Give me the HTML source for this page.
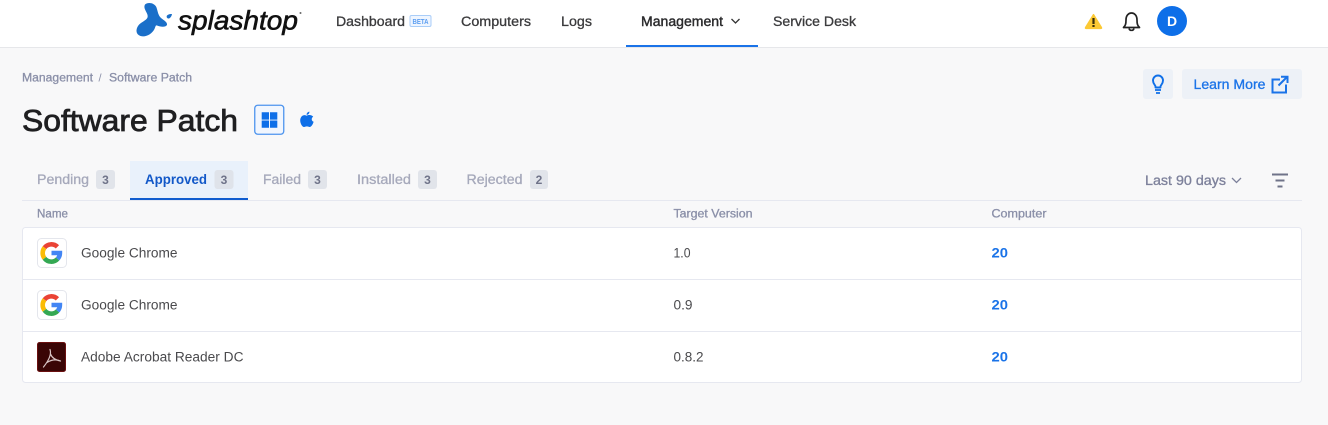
<!DOCTYPE html>
<html><head><meta charset="utf-8"><title>Software Patch</title>
<style>
html,body{margin:0;padding:0;background:#f8f8f9;width:1328px;height:425px;overflow:hidden}
svg{display:block}
text{font-family:"Liberation Sans",sans-serif;}
.m{stroke-width:.3px;paint-order:stroke}
</style></head><body>
<svg width="1328" height="425" viewBox="0 0 1328 425" xmlns="http://www.w3.org/2000/svg">
<defs>
<g id="g">
<rect x=".5" y=".5" width="29" height="29" rx="4" fill="#fff" stroke="#e4e6ec"/>
<g fill="none" stroke-width="4.600">
<path d="M20.400 8.900A8.600 8.600 0 0 0 7.500 9.700" stroke="#ea4335"/>
<path d="M7.500 9.700A8.600 8.600 0 0 0 7.500 20.300" stroke="#fbbc05"/>
<path d="M7.500 20.300A8.600 8.600 0 0 0 20.600 20.900" stroke="#34a853"/>
<path d="M20.600 20.900A8.600 8.600 0 0 0 22.900 15H14.500" stroke="#4285f4"/>
</g>
</g>
</defs>
<rect width="1328" height="425" fill="#f8f8f9"/>
<!-- header -->
<rect width="1328" height="47" fill="#fff"/>
<rect y="47" width="1328" height="1" fill="#e6e7ea"/>
<path d="M145 4.500C148 1.500 155 3 156.500 7.500C158 12 158 15 161 18C164 20.500 167.500 22 167 25C165.500 27.500 160.500 27 157 25.500C155.500 25 155.500 27 154.500 29C152 34 146 37.500 140.500 36C136 34.500 135.500 30 138 26C140.500 22 146 21 147.500 17.500C149 13.500 142.500 9 145 4.500Z" fill="#1a6fc9"/>
<path d="M167 15.500C168.500 14 171 13.700 172 14.200C171.500 16.500 170 18.500 168.300 18.500C166.800 18.300 166.200 16.800 167 15.500Z" fill="#1a6fc9"/>
<text x="178" y="29.500" font-size="27" font-style="italic" fill="#111" stroke="#111" stroke-width=".6" textLength="120" lengthAdjust="spacingAndGlyphs">splashtop</text>
<circle cx="300.500" cy="13" r="1" fill="#666"/>

<text class="m" x="336" y="26" font-size="13.500" fill="#3a3a3c" stroke="#3a3a3c" textLength="69" lengthAdjust="spacingAndGlyphs">Dashboard</text>
<rect x="410" y="15.500" width="21" height="11" rx="1.500" fill="#eef5ff" stroke="#a9cdf8"/>
<text x="412.500" y="24" font-size="7" font-weight="bold" fill="#5b9df0" textLength="16" lengthAdjust="spacingAndGlyphs">BETA</text>
<text class="m" x="461" y="26" font-size="13.500" fill="#3a3a3c" stroke="#3a3a3c" textLength="70" lengthAdjust="spacingAndGlyphs">Computers</text>
<text class="m" x="561" y="26" font-size="13.500" fill="#3a3a3c" stroke="#3a3a3c" textLength="31" lengthAdjust="spacingAndGlyphs">Logs</text>
<text class="m" x="641" y="26" font-size="13.500" fill="#2a2a2c" stroke="#2a2a2c" style="stroke-width:.4px" textLength="82" lengthAdjust="spacingAndGlyphs">Management</text>
<path d="M731.500 19l4 4 4-4" fill="none" stroke="#333" stroke-width="1.300"/>
<rect x="626" y="45" width="132" height="2" fill="#1a73e8"/>
<text class="m" x="773" y="26" font-size="13.500" fill="#3a3a3c" stroke="#3a3a3c" textLength="83" lengthAdjust="spacingAndGlyphs">Service Desk</text>

<path d="M1093.500 14.500L1101.500 27.500Q1102 28.500 1101 28.500H1086Q1085 28.500 1085.500 27.500Z" fill="#fcc934" stroke="#fcc934" stroke-width="1.200" stroke-linejoin="round"/>
<rect x="1092.400" y="18" width="2.200" height="6" fill="#3a2f0a"/>
<rect x="1092.400" y="25" width="2.200" height="2" fill="#3a2f0a"/>
<path d="M1123.500 27.500H1139.500C1137.500 25.500 1137 24 1137 20C1137 15.500 1134.500 13 1131.500 13S1126 15.500 1126 20C1126 24 1125.500 25.500 1123.500 27.500Z" fill="none" stroke="#222" stroke-width="1.700" stroke-linejoin="round"/>
<path d="M1129 28.500a2.600 2.600 0 0 0 5 0" fill="none" stroke="#222" stroke-width="1.600"/>
<circle cx="1172" cy="21" r="15" fill="#0e6fe8"/>
<text x="1172" y="26" font-size="14" font-weight="bold" fill="#fff" text-anchor="middle">D</text>

<!-- breadcrumb -->
<text class="m" x="22" y="81.500" font-size="11.500" fill="#8a8fa8" stroke="#8a8fa8" textLength="71" lengthAdjust="spacingAndGlyphs">Management</text>
<text x="98.500" y="81.500" font-size="11" fill="#8a8fa8">/</text>
<text class="m" x="109" y="81.500" font-size="11.500" fill="#8a8fa8" stroke="#8a8fa8" textLength="83" lengthAdjust="spacingAndGlyphs">Software Patch</text>

<!-- title -->
<text x="22" y="131" font-size="31" fill="#1f1f21" stroke="#1f1f21" stroke-width=".8" textLength="216" lengthAdjust="spacingAndGlyphs">Software Patch</text>
<rect x="254.750" y="105.250" width="29" height="29" rx="3" fill="#f1f6fe" stroke="#4d94ee" stroke-width="1.300"/>
<path d="M261.700 112.300h7.300v7.300h-7.300zM270 112.300h7.300v7.300h-7.300zM261.700 120.500h7.300v7.300h-7.300zM270 120.500h7.300v7.300h-7.300z" fill="#0e6fe8"/>
<g transform="translate(0 1.500)"><path d="M306.700 114.200C308 113.400 309 113.400 310.500 113.600C311.700 113.800 312.600 114.400 313.200 115.200C311 116.500 311.400 119.400 313.600 120.300C313 122.400 311.500 125.500 309.700 125.500C308.700 125.500 308 124.900 306.900 124.900C305.800 124.900 305 125.500 304.100 125.500C302 125.500 300.200 121.500 300.200 119C300.200 115.500 302.500 113.500 304.700 113.600C305.600 113.600 306.100 114 306.700 114.200ZM306.600 113.300C306.500 111.700 307.800 110.300 309.400 110.100C309.600 111.800 308.200 113.300 306.600 113.300Z" fill="#0e6fe8"/></g>

<!-- top right buttons -->
<rect x="1143" y="69" width="30" height="30" rx="3" fill="#edf1f7"/>
<path d="M1155.500 87.500V86.500C1155.500 85 1153 84 1153 80.500A5 5 0 0 1 1163 80.500C1163 84 1160.500 85 1160.500 86.500V87.500Z" fill="none" stroke="#0e6fe8" stroke-width="1.900" stroke-linejoin="round"/>
<path d="M1155 90h6M1156 93h4" stroke="#0e6fe8" stroke-width="1.700" fill="none"/>
<rect x="1182" y="69" width="120" height="30" rx="3" fill="#edf1f7"/>
<text class="m" x="1193.500" y="89" font-size="13.500" fill="#1a73e8" stroke="#1a73e8" textLength="72" lengthAdjust="spacingAndGlyphs">Learn More</text>
<path d="M1280 79.500H1272.500V92.500H1286V84.500" fill="none" stroke="#1a73e8" stroke-width="2"/>
<path d="M1278.500 85.500L1287 77M1281 76.800H1287.500V83" fill="none" stroke="#1a73e8" stroke-width="2"/>

<!-- tabs -->
<rect x="130" y="161" width="118" height="38" fill="#e9f1fb"/>
<rect x="130" y="198" width="118" height="2" fill="#0f5ccf"/>
<rect x="22" y="200" width="1280" height="1" fill="#e6e8f0"/>
<g font-size="13.500">
<text class="m" x="37" y="184" fill="#a6a9bb" stroke="#a6a9bb" textLength="52" lengthAdjust="spacingAndGlyphs">Pending</text>
<rect x="96" y="170" width="19" height="19" rx="3" fill="#e1e4ea"/>
<text x="105.500" y="184" font-size="12" font-weight="bold" fill="#6f7389" text-anchor="middle">3</text>
<text x="145" y="184" font-weight="bold" fill="#1258c8" textLength="62" lengthAdjust="spacingAndGlyphs">Approved</text>
<rect x="214.500" y="170" width="19" height="19" rx="3" fill="#dfe3ea"/>
<text x="224" y="184" font-size="12" font-weight="bold" fill="#6f7389" text-anchor="middle">3</text>
<text class="m" x="263" y="184" fill="#a6a9bb" stroke="#a6a9bb" textLength="38" lengthAdjust="spacingAndGlyphs">Failed</text>
<rect x="308" y="170" width="19" height="19" rx="3" fill="#e1e4ea"/>
<text x="317.500" y="184" font-size="12" font-weight="bold" fill="#6f7389" text-anchor="middle">3</text>
<text class="m" x="357" y="184" fill="#a6a9bb" stroke="#a6a9bb" textLength="54" lengthAdjust="spacingAndGlyphs">Installed</text>
<rect x="418" y="170" width="19" height="19" rx="3" fill="#e1e4ea"/>
<text x="427.500" y="184" font-size="12" font-weight="bold" fill="#6f7389" text-anchor="middle">3</text>
<text class="m" x="466.500" y="184" fill="#a6a9bb" stroke="#a6a9bb" textLength="56" lengthAdjust="spacingAndGlyphs">Rejected</text>
<rect x="530" y="170" width="18" height="19" rx="3" fill="#e1e4ea"/>
<text x="539" y="184" font-size="12" font-weight="bold" fill="#6f7389" text-anchor="middle">2</text>
<text class="m" x="1145" y="185" fill="#7d819b" stroke="#7d819b" textLength="81" lengthAdjust="spacingAndGlyphs">Last 90 days</text>
</g>
<path d="M1232 178l4.500 4.500 4.500-4.500" fill="none" stroke="#7d819b" stroke-width="1.300"/>
<path d="M1272 174.500h16M1275.500 180.500h9M1277.500 186.500h5" fill="none" stroke="#6f7389" stroke-width="2"/>

<!-- table head -->
<g font-size="11.500" fill="#8a8fa8" stroke="#8a8fa8" class="m">
<text x="37" y="217.500" textLength="31" lengthAdjust="spacingAndGlyphs">Name</text>
<text x="673.500" y="217.500" textLength="79" lengthAdjust="spacingAndGlyphs">Target Version</text>
<text x="991.500" y="217.500" textLength="55" lengthAdjust="spacingAndGlyphs">Computer</text>
</g>

<!-- table -->
<rect x="22.500" y="227.500" width="1279" height="155" rx="3" fill="#fff" stroke="#e6e8f0"/>
<rect x="23" y="279" width="1278" height="1" fill="#e6e8f0"/>
<rect x="23" y="331" width="1278" height="1" fill="#e6e8f0"/>

<use href="#g" x="37" y="238"/>
<use href="#g" x="37" y="290"/>
<rect x="37.500" y="342.500" width="28" height="29" rx="2" fill="#3a0505" stroke="#6b1010"/>
<path d="M43.500 367C47.500 362 52 355 50 349.500M47 362.500C51 360 56 359 60.500 361M50.500 354C52 358 55 360 60.500 361" fill="none" stroke="#d8c4c4" stroke-width="1.200" stroke-linecap="round"/>

<g font-size="13.500" fill="#4a4a4d">
<text x="81" y="257.500" textLength="96.500" lengthAdjust="spacingAndGlyphs">Google Chrome</text>
<text x="673.500" y="257.500" textLength="17" lengthAdjust="spacingAndGlyphs">1.0</text>
<text x="81" y="309.500" textLength="96.500" lengthAdjust="spacingAndGlyphs">Google Chrome</text>
<text x="673.500" y="309.500" textLength="19" lengthAdjust="spacingAndGlyphs">0.9</text>
<text x="81" y="361.500" textLength="162.500" lengthAdjust="spacingAndGlyphs">Adobe Acrobat Reader DC</text>
<text x="673.500" y="361.500" textLength="30" lengthAdjust="spacingAndGlyphs">0.8.2</text>
</g>
<g font-size="13.500" font-weight="bold" fill="#1a73e8">
<text x="991.500" y="257.500" textLength="16.500" lengthAdjust="spacingAndGlyphs">20</text>
<text x="991.500" y="309.500" textLength="16.500" lengthAdjust="spacingAndGlyphs">20</text>
<text x="991.500" y="361.500" textLength="16.500" lengthAdjust="spacingAndGlyphs">20</text>
</g>
</svg>
</body></html>
